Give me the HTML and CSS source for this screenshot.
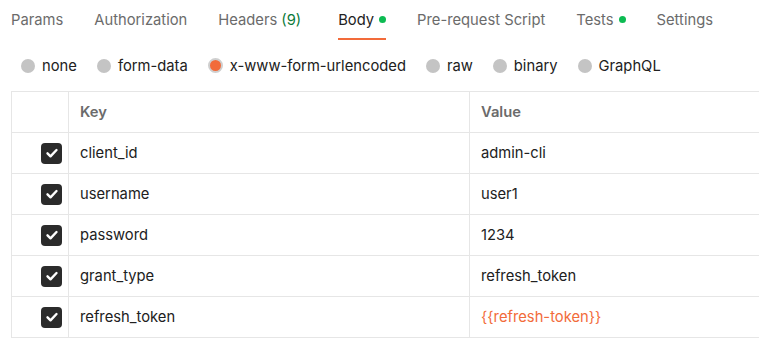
FILE: index.html
```html
<!DOCTYPE html>
<html>
<head>
<meta charset="utf-8">
<link rel="stylesheet" href="styles.css">
</head>
<body>
<div class="page">
  <nav class="tabs">
    <span class="tab">Params</span>
    <span class="tab">Authorization</span>
    <span class="tab">Headers <span class="count">(9)</span></span>
    <span class="tab active">Body <span class="dot"></span></span>
    <span class="tab">Pre-request Script</span>
    <span class="tab">Tests <span class="dot"></span></span>
    <span class="tab">Settings</span>
  </nav>
  <div class="radios">
    <label class="radio"><span class="circle"></span>none</label>
    <label class="radio"><span class="circle"></span>form-data</label>
    <label class="radio"><span class="circle on"></span>x-www-form-urlencoded</label>
    <label class="radio"><span class="circle"></span>raw</label>
    <label class="radio"><span class="circle"></span>binary</label>
    <label class="radio"><span class="circle"></span>GraphQL</label>
  </div>
  <div class="table">
    <div class="row head">
      <div class="cell check"></div>
      <div class="cell">Key</div>
      <div class="cell">Value</div>
    </div>
    <div class="row">
      <div class="cell check"><span class="box"><svg viewBox="0 0 20 20" width="20" height="20"><path d="M5.5 10.3l3 3 6-6.3" fill="none" stroke="#fff" stroke-width="2.4" stroke-linecap="round" stroke-linejoin="round"/></svg></span></div>
      <div class="cell">client_id</div>
      <div class="cell">admin-cli</div>
    </div>
    <div class="row">
      <div class="cell check"><span class="box"><svg viewBox="0 0 20 20" width="20" height="20"><path d="M5.5 10.3l3 3 6-6.3" fill="none" stroke="#fff" stroke-width="2.4" stroke-linecap="round" stroke-linejoin="round"/></svg></span></div>
      <div class="cell">username</div>
      <div class="cell">user1</div>
    </div>
    <div class="row">
      <div class="cell check"><span class="box"><svg viewBox="0 0 20 20" width="20" height="20"><path d="M5.5 10.3l3 3 6-6.3" fill="none" stroke="#fff" stroke-width="2.4" stroke-linecap="round" stroke-linejoin="round"/></svg></span></div>
      <div class="cell">password</div>
      <div class="cell">1234</div>
    </div>
    <div class="row">
      <div class="cell check"><span class="box"><svg viewBox="0 0 20 20" width="20" height="20"><path d="M5.5 10.3l3 3 6-6.3" fill="none" stroke="#fff" stroke-width="2.4" stroke-linecap="round" stroke-linejoin="round"/></svg></span></div>
      <div class="cell">grant_type</div>
      <div class="cell">refresh_token</div>
    </div>
    <div class="row">
      <div class="cell check"><span class="box"><svg viewBox="0 0 20 20" width="20" height="20"><path d="M5.5 10.3l3 3 6-6.3" fill="none" stroke="#fff" stroke-width="2.4" stroke-linecap="round" stroke-linejoin="round"/></svg></span></div>
      <div class="cell">refresh_token</div>
      <div class="cell var">{{refresh-token}}</div>
    </div>
  </div>
</div>
</body>
</html>
```

FILE: styles.css
```css
html, body {
  margin: 0;
  padding: 0;
  background: #fff;
  overflow: hidden;
}
body {
  font-family: Inter, "Noto Sans", sans-serif;
  font-size: 14.75px;
  color: #212121;
}
.page {
  width: 759px;
  height: 341px;
  overflow: hidden;
}
.tabs {
  display: flex;
  gap: 31px;
  padding-left: 11px;
  height: 40px;
}
.tab {
  display: flex;
  align-items: center;
  gap: 5px;
  color: #6b6b6b;
  height: 40px;
  padding-top: 1px;
  box-sizing: border-box;
  border-bottom: 2px solid transparent;
  white-space: nowrap;
}
.tab .count {
  color: #0a7a3a;
  margin-left: -1px;
}
.tab.active {
  color: #212121;
  border-bottom-color: #f26b3a;
  margin-left: 6px;
}
.dot {
  width: 7px;
  height: 7px;
  border-radius: 50%;
  background: #0cbb52;
  display: inline-block;
}
.radios {
  display: flex;
  align-items: center;
  gap: 20px;
  padding-left: 21px;
  height: 51px;
  box-sizing: border-box;
}
.radio {
  display: flex;
  align-items: center;
  gap: 7px;
  color: #212121;
  white-space: nowrap;
}
.circle {
  width: 14px;
  height: 14px;
  border-radius: 50%;
  background: #c4c4c4;
  box-sizing: border-box;
  display: inline-block;
}
.circle.on {
  width: 15px;
  height: 15px;
  background: #f26b3a;
  border: 2px solid #cfcfcf;
}
.table {
  margin-left: 11px;
  width: 800px;
  border-top: 1px solid #e6e6e6;
  border-left: 1px solid #e6e6e6;
}
.row {
  display: grid;
  grid-template-columns: 57px 401px 1fr;
  height: 41px;
  border-bottom: 1px solid #e6e6e6;
  box-sizing: border-box;
}
.cell {
  display: flex;
  align-items: center;
  padding-left: 11px;
  padding-bottom: 1px;
  border-right: 1px solid #e6e6e6;
  white-space: nowrap;
}
.row.head .cell {
  color: #6b6b6b;
  font-weight: 600;
}
.cell.check {
  justify-content: flex-end;
  padding-left: 0;
  padding-right: 6px;
  padding-bottom: 0;
}
.box {
  width: 21px;
  height: 21px;
  border-radius: 4px;
  background: #2b2b2b;
  display: flex;
  align-items: center;
  justify-content: center;
}
.box svg {
  width: 20px;
  height: 20px;
}
.var {
  color: #f26b3a;
}
```
